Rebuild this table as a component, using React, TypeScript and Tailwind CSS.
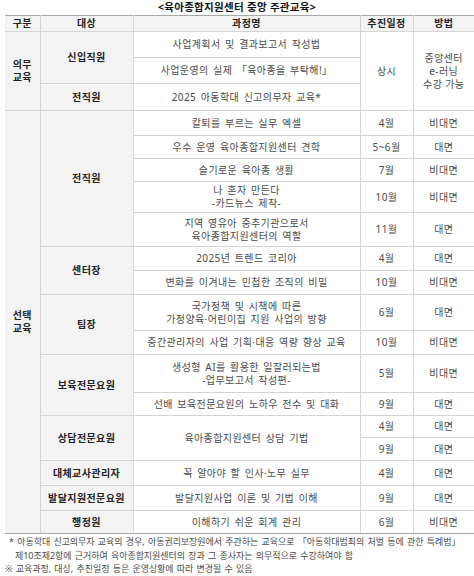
import React from "react";

type Cell = {
    text: string;
    rowSpan?: number;
    kind: "group" | "target" | "course" | "date" | "method";
};

const line = "border border-[#d4d4d4]";

function cellClass(kind: Cell["kind"]) {
    switch (kind) {
        case "group":
            return `${line} border-l-0 bg-[#f3f3f3] font-bold text-[#222]`;
        case "target":
            return `${line} bg-[#f3f3f3] font-bold text-[#222]`;
        case "course":
            return `${line} text-[#4a4a4a] [word-spacing:1.5px]`;
        case "date":
            return `${line} text-[#4a4a4a]`;
        case "method":
            return `${line} border-r-0 text-[#4a4a4a]`;
    }
}

const rows: { h: string; cells: Cell[] }[] = [
    {
        h: "h-[26px]",
        cells: [
            { text: "의무\n교육", rowSpan: 3, kind: "group" },
            { text: "신입직원", rowSpan: 2, kind: "target" },
            { text: "사업계획서 및 결과보고서 작성법", kind: "course" },
            { text: "상시", rowSpan: 3, kind: "date" },
            { text: "중앙센터\ne-러닝\n수강 가능", rowSpan: 3, kind: "method" },
        ],
    },
    { h: "h-[26px]", cells: [{ text: "사업운영의 실제 「육아종을 부탁해!」", kind: "course" }] },
    {
        h: "h-[27px]",
        cells: [
            { text: "전직원", kind: "target" },
            { text: "2025 아동학대 신고의무자 교육*", kind: "course" },
        ],
    },
    {
        h: "h-[25px]",
        cells: [
            { text: "선택\n교육", rowSpan: 16, kind: "group" },
            { text: "전직원", rowSpan: 5, kind: "target" },
            { text: "칼퇴를 부르는 실무 엑셀", kind: "course" },
            { text: "4월", kind: "date" },
            { text: "비대면", kind: "method" },
        ],
    },
    {
        h: "h-[23px]",
        cells: [
            { text: "우수 운영 육아종합지원센터 견학", kind: "course" },
            { text: "5~6월", kind: "date" },
            { text: "대면", kind: "method" },
        ],
    },
    {
        h: "h-[23px]",
        cells: [
            { text: "슬기로운 육아종 생활", kind: "course" },
            { text: "7월", kind: "date" },
            { text: "비대면", kind: "method" },
        ],
    },
    {
        h: "h-[31px]",
        cells: [
            { text: "나 혼자 만든다\n-카드뉴스 제작-", kind: "course" },
            { text: "10월", kind: "date" },
            { text: "비대면", kind: "method" },
        ],
    },
    {
        h: "h-[34px]",
        cells: [
            { text: "지역 영유아 중추기관으로서\n육아종합지원센터의 역할", kind: "course" },
            { text: "11월", kind: "date" },
            { text: "대면", kind: "method" },
        ],
    },
    {
        h: "h-[24px]",
        cells: [
            { text: "센터장", rowSpan: 2, kind: "target" },
            { text: "2025년 트렌드 코리아", kind: "course" },
            { text: "4월", kind: "date" },
            { text: "대면", kind: "method" },
        ],
    },
    {
        h: "h-[24px]",
        cells: [
            { text: "변화를 이겨내는 민첩한 조직의 비밀", kind: "course" },
            { text: "10월", kind: "date" },
            { text: "비대면", kind: "method" },
        ],
    },
    {
        h: "h-[36px]",
        cells: [
            { text: "팀장", rowSpan: 2, kind: "target" },
            { text: "국가정책 및 시책에 따른\n가정양육·어린이집 지원 사업의 방향", kind: "course" },
            { text: "6월", kind: "date" },
            { text: "대면", kind: "method" },
        ],
    },
    {
        h: "h-[24px]",
        cells: [
            { text: "중간관리자의 사업 기획·대응 역량 향상 교육", kind: "course" },
            { text: "10월", kind: "date" },
            { text: "비대면", kind: "method" },
        ],
    },
    {
        h: "h-[38px]",
        cells: [
            { text: "보육전문요원", rowSpan: 2, kind: "target" },
            { text: "생성형 AI를 활용한 일잘러되는법\n-업무보고서 작성편-", kind: "course" },
            { text: "5월", kind: "date" },
            { text: "비대면", kind: "method" },
        ],
    },
    {
        h: "h-[23px]",
        cells: [
            { text: "선배 보육전문요원의 노하우 전수 및 대화", kind: "course" },
            { text: "9월", kind: "date" },
            { text: "대면", kind: "method" },
        ],
    },
    {
        h: "h-[22px]",
        cells: [
            { text: "상담전문요원", rowSpan: 2, kind: "target" },
            { text: "육아종합지원센터 상담 기법", rowSpan: 2, kind: "course" },
            { text: "4월", kind: "date" },
            { text: "대면", kind: "method" },
        ],
    },
    {
        h: "h-[23px]",
        cells: [
            { text: "9월", kind: "date" },
            { text: "대면", kind: "method" },
        ],
    },
    {
        h: "h-[25px]",
        cells: [
            { text: "대체교사관리자", kind: "target" },
            { text: "꼭 알아야 할 인사·노무 실무", kind: "course" },
            { text: "4월", kind: "date" },
            { text: "대면", kind: "method" },
        ],
    },
    {
        h: "h-[25px]",
        cells: [
            { text: "발달지원전문요원", kind: "target" },
            { text: "발달지원사업 이론 및 기법 이해", kind: "course" },
            { text: "9월", kind: "date" },
            { text: "대면", kind: "method" },
        ],
    },
    {
        h: "h-[23px]",
        cells: [
            { text: "행정원", kind: "target" },
            { text: "이해하기 쉬운 회계 관리", kind: "course" },
            { text: "6월", kind: "date" },
            { text: "비대면", kind: "method" },
        ],
    },
];

export default function App() {
    return (
        <div className="w-[474px] h-[576px] bg-white overflow-hidden font-['Noto_Sans','Noto_Sans_CJK_KR',sans-serif]">
            <h1 className="h-[15px] text-center text-[10.5px] leading-[15px] font-bold text-[#111] tracking-[0.3px]">
                &lt;육아종합지원센터 중앙 주관교육&gt;
            </h1>

            <table className="ml-[5px] w-[469px] table-fixed border-collapse text-center text-[10px] leading-[13px] tracking-[0.4px]">
                <colgroup>
                    <col className="w-[35px]" />
                    <col className="w-[93px]" />
                    <col className="w-[227px]" />
                    <col className="w-[53px]" />
                    <col className="w-[61px]" />
                </colgroup>
                <thead>
                    <tr className="h-[16px] bg-[#f3f3f3] font-bold text-[#222]">
                        <th className={`${line} border-l-0 border-t-[#a8a8a8] p-0`}>구분</th>
                        <th className={`${line} border-t-[#a8a8a8] p-0`}>대상</th>
                        <th className={`${line} border-t-[#a8a8a8] p-0`}>과정명</th>
                        <th className={`${line} border-t-[#a8a8a8] p-0`}>추진일정</th>
                        <th className={`${line} border-r-0 border-t-[#a8a8a8] p-0`}>방법</th>
                    </tr>
                </thead>
                <tbody>
                    {rows.map((row, i) => (
                        <tr key={i} className={row.h}>
                            {row.cells.map((c, j) => (
                                <td
                                    key={j}
                                    rowSpan={c.rowSpan}
                                    className={`${cellClass(c.kind)} ${
                                        i === rows.length - 1 || (c.rowSpan && i + c.rowSpan === rows.length)
                                            ? "border-b-[#a8a8a8]"
                                            : ""
                                    } p-0 whitespace-pre-line align-middle`}
                                >
                                    {c.text}
                                </td>
                            ))}
                        </tr>
                    ))}
                </tbody>
            </table>

            <div className="mt-[1px] pl-[5px] text-[9px] leading-[13.5px] text-[#4a4a4a] tracking-[-0.05px] [word-spacing:1px] whitespace-nowrap">
                <p className="pl-[4px]">
                    * 아동학대 신고의무자 교육의 경우, 아동권리보장원에서 주관하는 교육으로 「아동학대범죄의 처벌 등에 관한 특례법」
                </p>
                <p className="pl-[10px]">제10조제2항에 근거하여 육아종합지원센터의 장과 그 종사자는 의무적으로 수강하여야 함</p>
                <p>※ 교육과정, 대상, 추진일정 등은 운영상황에 따라 변경될 수 있음</p>
            </div>
        </div>
    );
}
